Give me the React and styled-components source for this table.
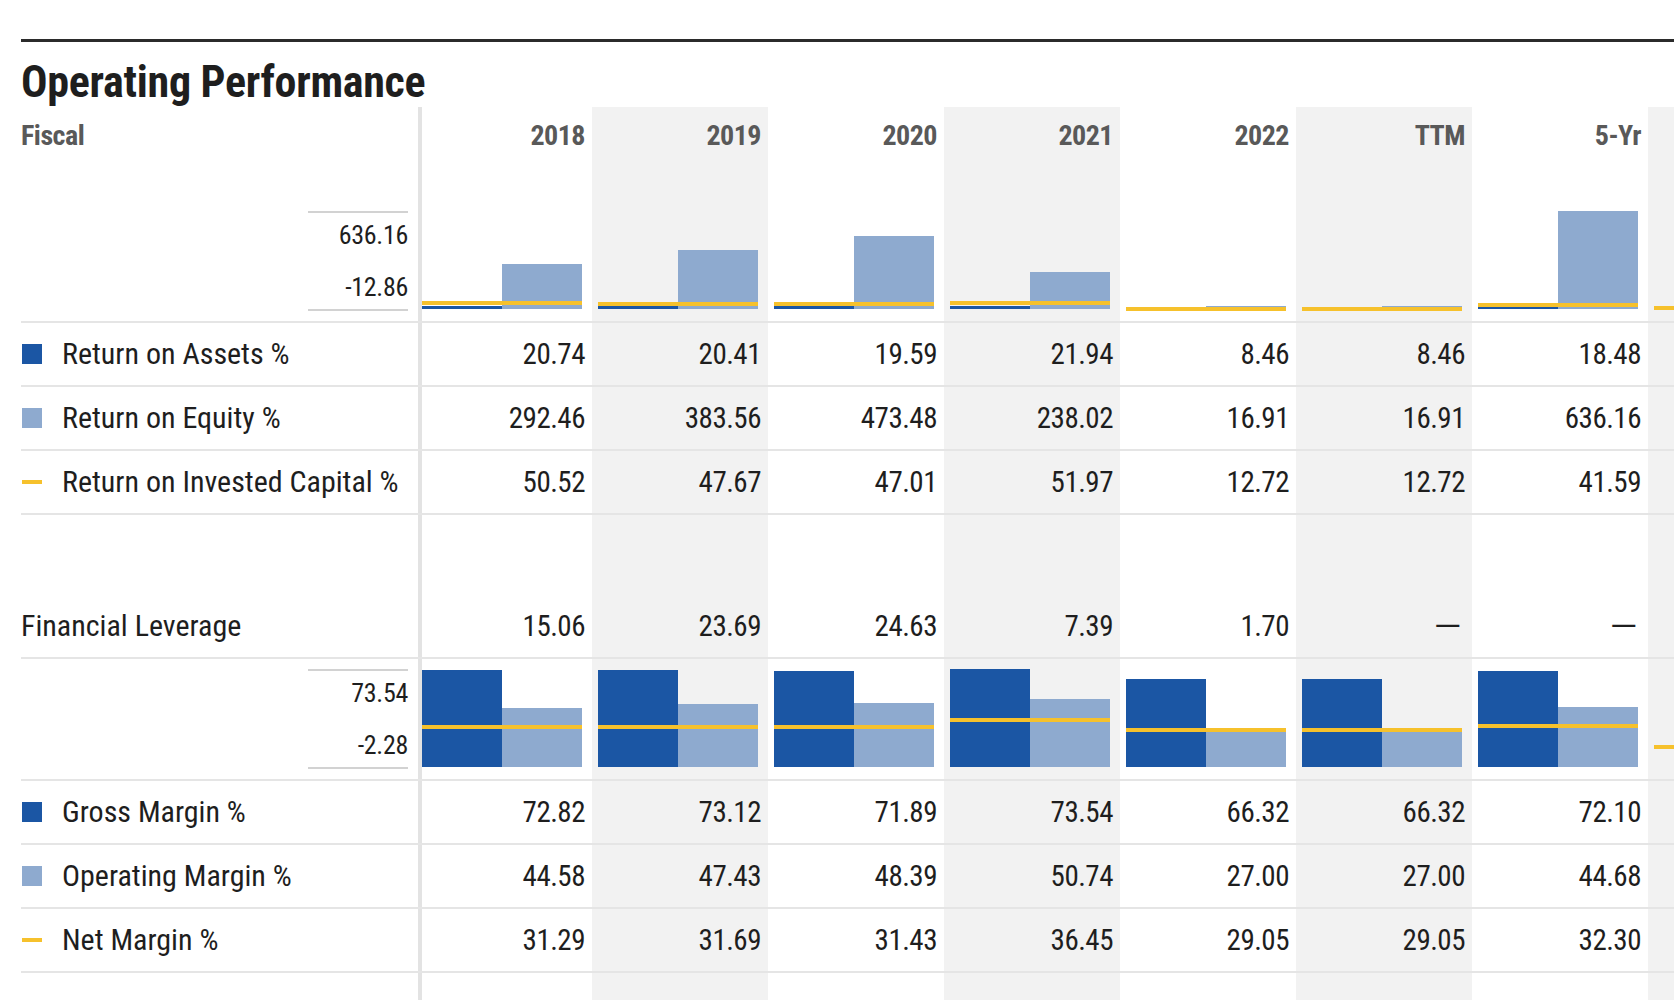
import React from "react";
import styled, { createGlobalStyle } from "styled-components";

const GlobalStyle = createGlobalStyle`
  *, *::before, *::after { box-sizing: border-box; }
  html, body { margin: 0; padding: 0; background: #ffffff; }
  body {
    overflow: hidden;
    font-family: "Roboto Condensed", Roboto, "Liberation Sans", Arial, sans-serif;
    font-stretch: 75%;
    color: #1e1e1e;
  }
`;

const COLORS = {
  dark: "#1b56a4",
  light: "#8eaacf",
  yellow: "#f6c12c",
  band: "#f2f2f2",
  line: "#e5e5e5",
  divider: "#e3e3e3",
  axis: "#d2d2d2",
};

const PLOT_H = 98;

const Page = styled.div`
  width: 100vw;
  height: 1000px;
  overflow: hidden;
  padding-left: 21px;
`;

const Rule = styled.div`
  margin-top: 39px;
  height: 3px;
  background: #2b2b2b;
`;

const Title = styled.h1`
  margin: 0;
  height: 65px;
  padding-top: 17px;
  font-size: 44px;
  line-height: 46px;
  font-weight: 700;
  letter-spacing: -0.3px;
  color: #1e1e1e;
  white-space: nowrap;
`;

const Table = styled.div`
  display: flex;
  flex-direction: column;
  width: 1830px;
`;

const Row = styled.div`
  display: grid;
  grid-template-columns: 397px 174px repeat(7, 176px);
  height: ${(p) => p.$h}px;
  border-bottom: ${(p) => (p.$noBorder ? "none" : `2px solid ${COLORS.line}`)};
`;

const LabelCell = styled.div`
  display: flex;
  align-items: ${(p) => (p.$top ? "flex-start" : "center")};
  padding-top: ${(p) => (p.$padTop ? `${p.$padTop}px` : "0")};
  font-size: 30px;
  line-height: 62px;
  white-space: nowrap;
`;

const DataCell = styled.div`
  background: ${(p) => (p.$shaded ? COLORS.band : "#ffffff")};
  border-left: ${(p) => (p.$first ? `4px solid ${COLORS.divider}` : "none")};
  display: flex;
  align-items: ${(p) => (p.$top ? "flex-start" : "center")};
  justify-content: flex-end;
  padding-right: 7px;
  padding-top: ${(p) => (p.$padTop ? `${p.$padTop}px` : "0")};
  font-size: 29px;
  letter-spacing: -0.5px;
  line-height: 62px;
  white-space: nowrap;
`;

const HeaderLabel = styled.span`
  font-size: 28px;
  line-height: 32px;
  font-weight: 700;
  letter-spacing: -0.5px;
  color: #595959;
`;

const ChartCell = styled.div`
  background: ${(p) => (p.$shaded ? COLORS.band : "#ffffff")};
  border-left: ${(p) => (p.$first ? `4px solid ${COLORS.divider}` : "none")};
  padding-top: 10px;
  padding-left: ${(p) => (p.$first ? "0" : "6px")};
`;

const Plot = styled.div`
  position: relative;
  width: 160px;
  height: ${PLOT_H}px;
  display: flex;
  align-items: flex-end;
`;

const Bar = styled.div`
  width: 80px;
  background: ${(p) => p.$color};
`;

const Line = styled.div`
  position: absolute;
  left: 0;
  width: ${(p) => (p.$stub ? "20px" : "160px")};
  height: 4px;
  background: ${COLORS.yellow};
`;

const AxisCell = styled.div`
  display: flex;
  justify-content: flex-end;
  padding: 10px 10px 0 0;
`;

const AxisBox = styled.div`
  width: 100px;
  height: 100px;
  border-top: 2px solid ${COLORS.axis};
  border-bottom: 2px solid ${COLORS.axis};
  padding: 7px 0 7px;
  display: flex;
  flex-direction: column;
  justify-content: space-between;
  align-items: flex-end;
  font-size: 26px;
  letter-spacing: -0.3px;
  line-height: 30px;
  color: #1e1e1e;
`;

const Swatch = styled.span`
  display: inline-block;
  width: 20px;
  height: ${(p) => (p.$kind === "line" ? "4px" : "20px")};
  margin: 0 20px 0 1px;
  background: ${(p) => p.$color};
  flex-shrink: 0;
`;

const Dash = styled.span`
  display: inline-block;
  padding-right: 3px;
  transform: scaleX(1.45);
  transform-origin: right center;
`;

const columns = [
  { label: "2018", shaded: false },
  { label: "2019", shaded: true },
  { label: "2020", shaded: false },
  { label: "2021", shaded: true },
  { label: "2022", shaded: false },
  { label: "TTM", shaded: true },
  { label: "5-Yr", shaded: false },
  { label: "", shaded: true },
];

const returns = {
  max: 636.16,
  min: -12.86,
  series: [
    { name: "Return on Assets %", kind: "dark", values: [20.74, 20.41, 19.59, 21.94, 8.46, 8.46, 18.48, null] },
    { name: "Return on Equity %", kind: "light", values: [292.46, 383.56, 473.48, 238.02, 16.91, 16.91, 636.16, null] },
    { name: "Return on Invested Capital %", kind: "line", values: [50.52, 47.67, 47.01, 51.97, 12.72, 12.72, 41.59, null] },
  ],
  extraLine: 19,
};

const margins = {
  max: 73.54,
  min: -2.28,
  series: [
    { name: "Gross Margin %", kind: "dark", values: [72.82, 73.12, 71.89, 73.54, 66.32, 66.32, 72.1, null] },
    { name: "Operating Margin %", kind: "light", values: [44.58, 47.43, 48.39, 50.74, 27.0, 27.0, 44.68, null] },
    { name: "Net Margin %", kind: "line", values: [31.29, 31.69, 31.43, 36.45, 29.05, 29.05, 32.3, null] },
  ],
  extraLine: 16.5,
};

const leverage = ["15.06", "23.69", "24.63", "7.39", "1.70", "—", "—", ""];

const kindColor = { dark: COLORS.dark, light: COLORS.light, line: COLORS.yellow };

function ChartRow({ data }) {
  const px = (v) => Math.max(0, (v / data.max) * PLOT_H);
  return (
    <Row $h={122}>
      <AxisCell>
        <AxisBox>
          <span>{data.max.toFixed(2)}</span>
          <span>{data.min.toFixed(2)}</span>
        </AxisBox>
      </AxisCell>
      {columns.map((c, i) => {
        const d = data.series[0].values[i];
        const l = data.series[1].values[i];
        const y = i === 7 ? data.extraLine : data.series[2].values[i];
        return (
          <ChartCell key={i} $shaded={c.shaded} $first={i === 0}>
            <Plot>
              <Bar $color={COLORS.dark} style={{ height: d == null ? 0 : px(d) }} />
              <Bar $color={COLORS.light} style={{ height: l == null ? 0 : px(l) }} />
              {y != null && <Line $stub={i === 7} style={{ top: PLOT_H - px(y) }} />}
            </Plot>
          </ChartCell>
        );
      })}
    </Row>
  );
}

function ValueRow({ series }) {
  return (
    <Row $h={64}>
      <LabelCell>
        <Swatch $kind={series.kind} $color={kindColor[series.kind]} />
        {series.name}
      </LabelCell>
      {columns.map((c, i) => (
        <DataCell key={i} $shaded={c.shaded} $first={i === 0}>
          {series.values[i] == null ? "" : series.values[i].toFixed(2)}
        </DataCell>
      ))}
    </Row>
  );
}

function BlankRow({ h }) {
  return (
    <Row $h={h} $noBorder>
      <LabelCell />
      {columns.map((c, i) => (
        <DataCell key={i} $shaded={c.shaded} $first={i === 0} />
      ))}
    </Row>
  );
}

export default function App() {
  return (
    <>
      <GlobalStyle />
      <Page>
        <Rule />
        <Title>Operating Performance</Title>
        <Table>
          <Row $h={94} $noBorder>
            <LabelCell $top $padTop={13}>
              <HeaderLabel>Fiscal</HeaderLabel>
            </LabelCell>
            {columns.map((c, i) => (
              <DataCell key={i} $shaded={c.shaded} $first={i === 0} $top $padTop={13}>
                <HeaderLabel>{c.label}</HeaderLabel>
              </DataCell>
            ))}
          </Row>
          <ChartRow data={returns} />
          {returns.series.map((s) => (
            <ValueRow key={s.name} series={s} />
          ))}
          <BlankRow h={80} />
          <Row $h={64}>
            <LabelCell>Financial Leverage</LabelCell>
            {columns.map((c, i) => (
              <DataCell key={i} $shaded={c.shaded} $first={i === 0}>
                {leverage[i] === "—" ? <Dash>{leverage[i]}</Dash> : leverage[i]}
              </DataCell>
            ))}
          </Row>
          <ChartRow data={margins} />
          {margins.series.map((s) => (
            <ValueRow key={s.name} series={s} />
          ))}
          <BlankRow h={60} />
        </Table>
      </Page>
    </>
  );
}
